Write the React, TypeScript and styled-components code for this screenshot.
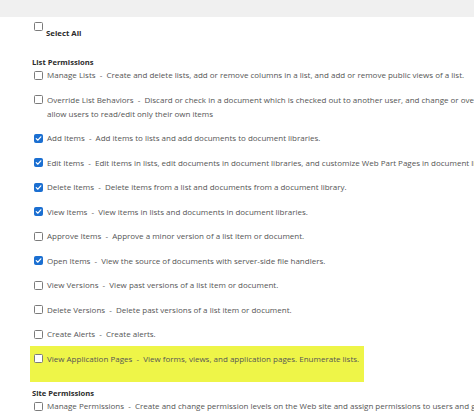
import styled, { createGlobalStyle } from "styled-components";

const Global = createGlobalStyle`
    html, body{
        margin: 0;
        padding: 0;
        background: #ffffff;
        overflow: hidden;
    }
    body{
        font-family: 'Open Sans', 'Noto Sans', sans-serif;
        -webkit-font-smoothing: antialiased;
    }
`

const Strip = styled.div`
    height: 17px;
    background: #f0f0f0;
`

const Page = styled.div`
    padding-left: 32px;
    width: 640px;
`

const SelectAllRow = styled.div`
    display: flex;
    padding-top: 5px;
    padding-left: 2px;
    ${() => Box}{
        margin-top: 0;
    }
    .label{
        font: 700 7.8px 'Open Sans', sans-serif;
        color: #2b2b2b;
        line-height: 12px;
        padding-top: 5px;
        margin-left: 3px;
    }
`

const Heading = styled.h3<{ $top: number }>`
    margin: ${p => p.$top}px 0 0 0;
    font: 700 7.6px 'Open Sans', sans-serif;
    line-height: 12px;
    color: #2b2b2b;
`

const Row = styled.div<{ $first?: boolean }>`
    display: flex;
    align-items: flex-start;
    margin-top: ${p => (p.$first ? 0 : 10.5)}px;
    padding-left: 2px;
    .text{
        font: 400 8px 'Open Sans', sans-serif;
        line-height: 14px;
        color: #555555;
        white-space: pre;
        margin-left: 4px;
    }
`

const Highlight = styled.div`
    background: #eef548;
    width: 332px;
    margin: 5px 0 0 -2px;
    padding: 5.5px 0 16.5px 2px;
    ${Row}{
        margin-top: 0;
    }
`

const Box = styled.span<{ $checked?: boolean }>`
    flex: none;
    width: 9px;
    height: 9px;
    margin-top: 2.5px;
    box-sizing: border-box;
    border-radius: 1.5px;
    border: 1px solid ${p => (p.$checked ? "#1b6fd1" : "#7b7b7b")};
    background: ${p => (p.$checked ? "#1b6fd1" : "#ffffff")};
    display: flex;
    align-items: center;
    justify-content: center;
    svg{
        display: block;
    }
`

function Check(props: { checked?: boolean }) {
    return (
        <Box $checked={props.checked}>
            {props.checked && (
                <svg width="7" height="7" viewBox="0 0 10 10">
                    <path d="M1.8 5.2 L4.1 7.4 L8.3 2.6" fill="none" stroke="#fff" strokeWidth="1.8" strokeLinecap="round" strokeLinejoin="round" />
                </svg>
            )}
        </Box>
    )
}

type Perm = { name: string, desc: string[], checked?: boolean }

const listPerms: Perm[] = [
    { name: "Manage Lists", desc: ["Create and delete lists, add or remove columns in a list, and add or remove public views of a list."] },
    { name: "Override List Behaviors", desc: ["Discard or check in a document which is checked out to another user, and change or override item-level permissions that", "allow users to read/edit only their own items"] },
    { name: "Add Items", desc: ["Add items to lists and add documents to document libraries."], checked: true },
    { name: "Edit Items", desc: ["Edit items in lists, edit documents in document libraries, and customize Web Part Pages in document libraries."], checked: true },
    { name: "Delete Items", desc: ["Delete items from a list and documents from a document library."], checked: true },
    { name: "View Items", desc: ["View items in lists and documents in document libraries."], checked: true },
    { name: "Approve Items", desc: ["Approve a minor version of a list item or document."] },
    { name: "Open Items", desc: ["View the source of documents with server-side file handlers."], checked: true },
    { name: "View Versions", desc: ["View past versions of a list item or document."] },
    { name: "Delete Versions", desc: ["Delete past versions of a list item or document."] },
    { name: "Create Alerts", desc: ["Create alerts."] },
]

function PermRow(props: { perm: Perm, first?: boolean }) {
    const { perm } = props
    const text = perm.name + "  -  " + perm.desc[0] + (perm.desc[1] ? "\n" + perm.desc[1] : "")
    return (
        <Row $first={props.first}>
            <Check checked={perm.checked} />
            <span className="text">{text}</span>
        </Row>
    )
}

export default function App() {
    return (
        <>
            <Global />
            <Strip />
            <Page>
                <SelectAllRow>
                    <Check />
                    <span className="label">Select All</span>
                </SelectAllRow>

                <Heading $top={17}>List Permissions</Heading>
                {listPerms.map((p, i) => (
                    <PermRow key={p.name} perm={p} first={i === 0} />
                ))}
                <Highlight>
                    <PermRow perm={{ name: "View Application Pages", desc: ["View forms, views, and application pages. Enumerate lists."] }} />
                </Highlight>

                <Heading $top={5}>Site Permissions</Heading>
                <PermRow first perm={{ name: "Manage Permissions", desc: ["Create and change permission levels on the Web site and assign permissions to users and groups."] }} />
            </Page>
        </>
    )
}
